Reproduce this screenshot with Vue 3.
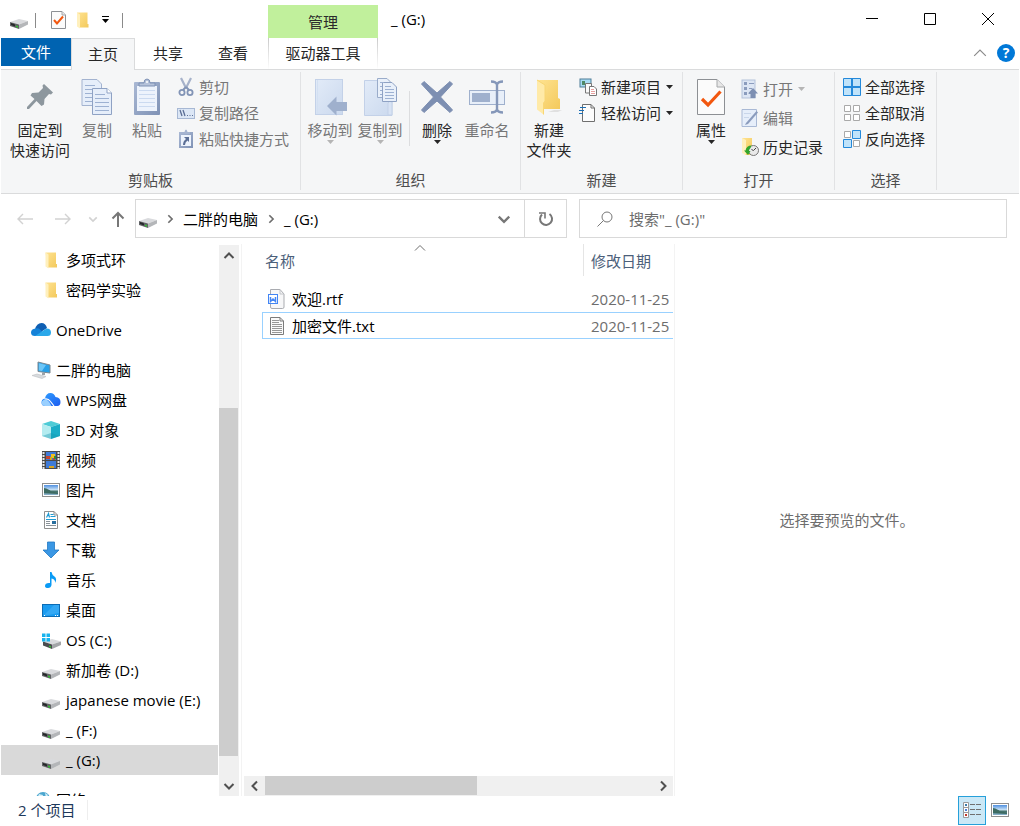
<template>
  <div class="explorer">
    <svg width="0" height="0" class="sprite" aria-hidden="true">
      <defs>
        <linearGradient id="gFolder" x1="0" y1="0" x2="1" y2="1">
          <stop offset="0" stop-color="#ffe391" />
          <stop offset="1" stop-color="#f3c95c" />
        </linearGradient>
        <linearGradient id="gSteel" x1="0" y1="0" x2="1" y2="1">
          <stop offset="0" stop-color="#a9b8d4" />
          <stop offset="1" stop-color="#7f92b5" />
        </linearGradient>
        <linearGradient id="gPale" x1="0" y1="0" x2="1" y2="1">
          <stop offset="0" stop-color="#e2ebf8" />
          <stop offset="1" stop-color="#cbd9ee" />
        </linearGradient>
        <linearGradient id="gSky" x1="0" y1="0" x2="0" y2="1">
          <stop offset="0" stop-color="#4f8fe0" />
          <stop offset="0.5" stop-color="#cfe6f7" />
          <stop offset="0.6" stop-color="#3d6b62" />
          <stop offset="1" stop-color="#8fb7d6" />
        </linearGradient>
        <linearGradient id="gWps" x1="0" y1="0" x2="1" y2="1">
          <stop offset="0" stop-color="#2fa0ff" />
          <stop offset="1" stop-color="#1d5cf0" />
        </linearGradient>
      </defs>

      <symbol id="drive" viewBox="0 0 18 18">
        <path d="M0 11 9 8 18 10 9 13.500z" fill="#d9dadd" />
        <path d="M0 11 9 13.500V18L0 15z" fill="#606265" />
        <path d="M9 13.500 18 10V13.500L9 18z" fill="#b4b6b9" />
        <path d="M1 12l4 1.500v2L1 14z" fill="#252729" />
        <path d="M6 14.500l2 .700v1.500l-2-.700z" fill="#2fc52f" />
      </symbol>
      <symbol id="osdrive" viewBox="0 0 20 18">
        <path d="M2 10.500 11 8 20 10.500 11 13.500z" fill="#d9dadd" />
        <path d="M2 10.500 11 13.500V18L2 14.500z" fill="#4a4c4f" />
        <path d="M11 13.500 20 10.500V14L11 18z" fill="#a3a5a8" />
        <path d="M8 14.500l2 .700v1.500L8 16z" fill="#2fc52f" />
        <path d="M1 2.500h3.500V6H1zM5.500 2.500H9V6H5.500zM1 7h3.500v3.500H1zM5.500 7H9v3.500H5.500z" fill="#18b4ee" />
      </symbol>
      <symbol id="checkpage" viewBox="0 0 28 36">
        <path d="M.5.5H20L27.500 8V35.500H.5z" fill="#fbfbfb" stroke="#8d9094" />
        <path d="M20 .5V8h7.500" fill="#e7e7e7" stroke="#a6a8aa" />
        <path d="M5 20l6 6L23.500 12.500" fill="none" stroke="#f2570f" stroke-width="3.200" />
      </symbol>
      <symbol id="checksmall" viewBox="0 0 15 18">
        <path d="M.5.5H11L14.500 4V17.500H.5z" fill="#fbfbfb" stroke="#8d9094" />
        <path d="M11 .5V4h3.500" fill="#e7e7e7" stroke="#a6a8aa" />
        <path d="M3 9l3 3.500 6-7" fill="none" stroke="#f2570f" stroke-width="2" />
      </symbol>
      <symbol id="folder" viewBox="0 0 13 17">
        <path d="M1 .5h10.500V12h1V15.500H3z" fill="url(#gFolder)" />
        <path d="M1 .5 4 2.500V16.500L1 14.500z" fill="#fff0bd" />
      </symbol>
      <symbol id="bigfolder" viewBox="0 0 26 38">
        <path d="M18 32l8 0-4 2h-10z" fill="#e0e0e0" />
        <path d="M1 2H22V20l2 1V31H8z" fill="url(#gFolder)" />
        <path d="M1 2 9 7V23L7.500 25V36.500L1 31.500z" fill="#ffeaa8" />
        <path d="M1 2 9 7V23L7.500 25V36.500" fill="none" stroke="#f8d674" />
      </symbol>
      <symbol id="pin" viewBox="0 0 28 28">
        <path d="M18 1 27 9.500 25 11.500 23 11 18.500 16 18 21.500 15.500 23 10.500 18 3 26H1V24L8.500 16 4.500 12.500 6 10 12.500 9.500 17 5 16.500 2.500z" fill="#8d979e" />
      </symbol>
      <symbol id="copy" viewBox="0 0 32 38">
        <path d="M1 1.500H16L20.500 6V27.500H1z" fill="#e6eefa" stroke="#a3b3d0" />
        <path d="M4 7.500H14M4 11.500H17M4 15.500H12M4 19.500H11M4 23.500H11" stroke="#9db1d2" />
        <path d="M11.500 10.500H26L30.500 15V36.500H11.500z" fill="#e6eefa" stroke="#8fa2c4" />
        <path d="M26 10.500V15h4.500" fill="#fff" stroke="#8fa2c4" />
        <path d="M14 16.500H24M14 20.500H28M14 24.500H28M14 28.500H28M14 32.500H28" stroke="#9db1d2" />
      </symbol>
      <symbol id="paste" viewBox="0 0 28 38">
        <rect x="1" y="4" width="26" height="33" rx="1" fill="url(#gSteel)" />
        <rect x="4" y="8" width="20" height="25" fill="#edf3fc" />
        <path d="M6 12.500H22M6 16.500H22M6 20.500H22M6 24.500H22M6 28.500H22" stroke="#cbdaf0" />
        <path d="M6 8V5h5q0-4 3-4t3 4h5v3z" fill="#b5c2da" stroke="#7f92b5" />
        <circle cx="14" cy="4" r="1" fill="#fff" />
      </symbol>
      <symbol id="scissors" viewBox="0 0 18 20">
        <path d="M4 1 9 11M14 1 9 11" fill="none" stroke="#a6b2ca" stroke-width="2.200" />
        <path d="M9 10 6 13M9 10l3 3" stroke="#8294b6" stroke-width="2" />
        <circle cx="5" cy="15.500" r="2.600" fill="none" stroke="#8294b6" stroke-width="1.800" />
        <circle cx="13" cy="15.500" r="2.600" fill="none" stroke="#8294b6" stroke-width="1.800" />
      </symbol>
      <symbol id="path" viewBox="0 0 18 18">
        <rect x=".5" y="4.500" width="17" height="10" fill="#dce7f6" stroke="#a7b8d4" />
        <path d="M3 6l2 6M6 6l2 6" stroke="#5b6f96" stroke-width="1.300" />
        <path d="M10 11.500h1M12.500 11.500h1M15 11.500h1" stroke="#5b6f96" />
      </symbol>
      <symbol id="shortcut" viewBox="0 0 18 20">
        <rect x="2" y="3" width="14" height="16" fill="url(#gSteel)" />
        <rect x="4" y="6" width="10" height="11" fill="#edf3fc" />
        <path d="M5 5V3h2.500Q8 .5 9 .5t1.500 2.500H13v2z" fill="#a5b4d0" />
        <path d="M7 8h5v5l-1.500-1.500Q8 13 8 16H6q0-4 3-6z" fill="#5b6f96" />
      </symbol>
      <symbol id="moveto" viewBox="0 0 34 38">
        <rect x="2.500" y="1.500" width="27" height="35" fill="url(#gPale)" stroke="#c3d1e8" />
        <path d="M4.500 2v34" stroke="#d3e0f2" />
        <path d="M14 28 23.500 18.500V24H34V33H23.500V37.500z" fill="#9fb0cd" />
      </symbol>
      <symbol id="copyto" viewBox="0 0 36 40">
        <path d="M2.500 3.500H27V25h3V38.500H2.500z" fill="url(#gPale)" stroke="#c3d1e8" />
        <path d="M26 38V26q1-3 4-1V38z" fill="#d8e3f4" stroke="#c3d1e8" />
        <path d="M15.500 1.500H25L28.500 5V20.500H15.500z" fill="#e9f0fa" stroke="#9aacca" />
        <path d="M20.500 5.500H30L34.500 10V24.500H20.500z" fill="#e9f0fa" stroke="#8fa2c4" />
        <path d="M18 5.500h4M18 9.500h2M18 13.500h2M18 17.500h2M23 9.500h6M23 12.500h9M23 15.500h9M23 18.500h9M23 21.500h9" stroke="#9db1d2" />
      </symbol>
      <symbol id="delete" viewBox="0 0 34 34">
        <path d="M4 1.500 17 13 30 1.500 32.500 4 20.500 17 32.500 30 30 32.500 17 21 4 32.500 1.500 30 13.500 17 1.500 4z" fill="#7d8fb2" stroke="#7d8fb2" />
      </symbol>
      <symbol id="rename" viewBox="0 0 38 36">
        <rect x="1.500" y="11.500" width="35" height="14" fill="#e8eff9" stroke="#9fb0cd" />
        <rect x="4" y="14" width="18" height="9" fill="#9fb0cd" />
        <path d="M23 2.500q5 0 6 3 1-3 6-3M23 33.500q5 0 6-3 1 3 6 3M29 4V32" fill="none" stroke="#8597b9" stroke-width="2.400" />
      </symbol>
      <symbol id="newitem" viewBox="0 0 18 18">
        <rect x="1" y="1" width="11" height="8" fill="#a8dcf4" stroke="#4f7d97" />
        <rect x="3" y="3" width="3" height="4" fill="#4f8a67" />
        <path d="M6.500 5.500h6V15h-6z" fill="#fafafa" stroke="#777" />
        <path d="M10.500 8.500H15l2.500 2.500v6.500h-7z" fill="#fff" stroke="#777" />
        <path d="M12 11.500h3M12 13.500h4M12 15.500h4" stroke="#e8a0a0" />
      </symbol>
      <symbol id="easyaccess" viewBox="0 0 18 20">
        <path d="M3.500 1.500H12L15.500 5V18.500H3.500z" fill="#fcfcfc" stroke="#6f6f6f" />
        <path d="M12 1.500V5h3.500" fill="none" stroke="#6f6f6f" />
        <path d="M1 4.500h6M0 7.500h5M0 10.500h4" stroke="#1c6fb5" stroke-width="1.200" />
      </symbol>
      <symbol id="open" viewBox="0 0 18 20">
        <rect x="1" y="1" width="13" height="18" fill="#dde6f4" stroke="#b3c1da" />
        <path d="M3 3h3v3H3zM3 8h3v3H3zM3 13h3v3H3z" fill="#8b9cbd" />
        <path d="M8 4.500h5M8 9.500h3M8 14.500h2" stroke="#8b9cbd" />
        <path d="M12 9l5 5.500h-2.500V19h-5v-4.500H7z" fill="#7d8fb2" />
      </symbol>
      <symbol id="edit" viewBox="0 0 18 20">
        <path d="M1 1.500H15.500V18.500H1z" fill="#e6eefa" stroke="#a9b9d5" />
        <path d="M3 5.500h7M3 9.500h5" stroke="#c9d6ea" />
        <path d="M5 15 15.500 3l1.500 1.500L7 16l-3 1z" fill="#8b9cbd" />
      </symbol>
      <symbol id="history" viewBox="0 0 18 20">
        <path d="M1 1H11V18H4z" fill="url(#gFolder)" />
        <path d="M1 1l4 2v15l-4-2z" fill="#fff0bd" />
        <circle cx="12.500" cy="13.500" r="5" fill="#e9e9e9" stroke="#777" />
        <path d="M12.500 13.500 15 11M12.500 13.500l-2-1" stroke="#444" />
        <path d="M4.500 13.500q1-5 6-5l-1 2.500Q8 12 8 14h1.500L7 18l-4-4.500z" fill="#32a52c" />
      </symbol>
      <symbol id="selectall" viewBox="0 0 18 18">
        <path d="M.5.5h17v17H.5z" fill="#c0e3fa" stroke="#2489da" />
        <path d="M9 0v18M0 9h18" stroke="#2489da" stroke-width="2" />
      </symbol>
      <symbol id="selectnone" viewBox="0 0 18 18">
        <path d="M1.500 1.500h6v6h-6zM10.500 1.500h6v6h-6zM1.500 10.500h6v6h-6zM10.500 10.500h6v6h-6z" fill="#fff" stroke="#a9a9a9" />
      </symbol>
      <symbol id="invert" viewBox="0 0 18 18">
        <path d="M1.500 1.500h6v6h-6zM10.500 10.500h6v6h-6z" fill="#fff" stroke="#a9a9a9" />
        <path d="M9.500.5h8v8h-8zM.5 9.500h8v8h-8z" fill="#c0e3fa" stroke="#2489da" />
      </symbol>
      <symbol id="onedrive" viewBox="0 0 20 18">
        <path d="M4 8.500Q5.500 2 10.500 2q4 0 5.500 5L10 11z" fill="#0f5fb3" />
        <path d="M4 15q-4 0-4-3.500T4.500 7.500Q7 6.500 9 8.500l6 6z" fill="#1582d8" />
        <path d="M4 15 15.500 7.500Q20 7.500 20 11.500 20 15 16.500 15z" fill="#2aa8ea" />
      </symbol>
      <symbol id="pc" viewBox="0 0 20 18">
        <path d="M7 1 19 4V12L7 10.500z" fill="#28a0e8" stroke="#7b8790" />
        <path d="M8 2.200 15 4l-4 6-3-.400z" fill="#6cc6f7" />
        <path d="M11 11.500l3 .500v2h-3z" fill="#9ba3a9" />
        <path d="M1 14.500 6 13l9 2.500-4 2z" fill="#d8dbde" stroke="#bcc0c3" stroke-width=".6" />
      </symbol>
      <symbol id="wps" viewBox="0 0 20 18">
        <path d="M4.500 15q-4 0-4-3.500T4 7.500Q5 2 9.500 2q3.500 0 5 4 5 .500 5 5t-4 4z" fill="url(#gWps)" />
        <path d="M2 14.500q-2-2-1-4 1-2 4-2 2 .500 3.500 3l2 3.500H4z" fill="#9ad0ff" />
        <path d="M3.500 8Q7 7 9.500 10.500L13 15" fill="none" stroke="#fff" stroke-width="1.200" />
      </symbol>
      <symbol id="cube" viewBox="0 0 18 18">
        <path d="M0 3 9 0 18 3 9 6z" fill="#4ecbd6" />
        <path d="M0 3 9 6V18L0 15z" fill="#b4ecf0" />
        <path d="M9 6 18 3V15L9 18z" fill="#1badc7" />
        <path d="M0 15 9 12 18 15 9 18z" fill="#1496b0" fill-opacity=".4" />
      </symbol>
      <symbol id="video" viewBox="0 0 18 18">
        <rect width="18" height="18" fill="#4a4a4a" />
        <path d="M1.500 1v17M16.500 1v17" stroke="#e8e8e8" stroke-width="2" stroke-dasharray="2 1" />
        <path d="M4 1h10v8H4zM4 10h10v7H4z" fill="#3f7bd8" />
        <path d="M9 3h4v4H9z" fill="#f0c020" />
        <path d="M4 5h4v3H4zM11 7h2v2h-2z" fill="#c8452f" />
        <path d="M8 6h2v3H8zM7 15h5v2H7z" fill="#d9a520" />
        <path d="M12 5h2v3h-2z" fill="#2f8a3c" />
      </symbol>
      <symbol id="picture" viewBox="0 0 18 18">
        <rect x=".5" y="2.500" width="17" height="13" fill="#fff" stroke="#8f8f8f" />
        <rect x="2" y="4" width="14" height="10" fill="url(#gSky)" />
        <path d="M2 7q5 1 7 3.500l7 1V13L2 12z" fill="#3d6b62" />
      </symbol>
      <symbol id="document" viewBox="0 0 18 18">
        <path d="M2.500.5H12L15.500 4V17.500H2.500z" fill="#fff" stroke="#8f8f8f" />
        <path d="M12 .5V4h3.500" fill="none" stroke="#8f8f8f" />
        <path d="M4.500 6.500 6.500 2.500 7.500 6.500M8.500 3.500h3M8.500 5.500h5M4 8.500h10" fill="none" stroke="#1f9bd4" stroke-width="1.200" />
        <path d="M4 10.500h4M4 12.500h4M4 14.500h10" stroke="#8a9299" />
        <path d="M10 10h4v3h-4z" fill="#2a6f9f" />
      </symbol>
      <symbol id="download" viewBox="0 0 18 18">
        <path d="M5.500 1h7v8H17L9 17 1 9h4.500z" fill="#3a97e4" stroke="#2279c4" stroke-width=".8" />
      </symbol>
      <symbol id="music" viewBox="0 0 18 18">
        <path d="M8 1h1.500q.500 3 3 4.500 3 2.500.500 6.500.500-4-3.500-4.500V14q-.500 3-3.500 3-3 0-3-2 0-3 4-3H8z" fill="#0a9bf5" />
      </symbol>
      <symbol id="desktop" viewBox="0 0 18 18">
        <rect x=".5" y="3.500" width="17" height="12" fill="#1a9bf0" stroke="#0c6cb5" />
        <path d="M1 15 12 4h5v8z" fill="#4db5f8" fill-opacity=".5" />
        <path d="M2 14.500h1M13 14.500h1M15 14.500h1" stroke="#fff" />
      </symbol>
      <symbol id="network" viewBox="0 0 20 18">
        <circle cx="12" cy="8" r="7" fill="#4ba6cf" />
        <path d="M8 3l4 1-1 4H6zM14 2l3 2-2 3z" fill="#d5eef7" />
      </symbol>
      <symbol id="rtf" viewBox="0 0 18 20">
        <path d="M2.500.5H12L16 5V18q0 1.500-1.500 1.500H4q-1.500 0-1.500-1.500z" fill="#f7f7f8" stroke="#a9abb0" />
        <path d="M12 .5V5h4" fill="none" stroke="#c2c4c8" />
        <rect x=".5" y="5.500" width="9" height="9" fill="#fff" stroke="#4285f4" />
        <path d="M2.500 8v4.500L5 10l2.500 2.500V8" fill="none" stroke="#4285f4" stroke-width="1.500" />
      </symbol>
      <symbol id="txt" viewBox="0 0 18 20">
        <path d="M2.500 1.500H12L15.500 5V18.500H2.500z" fill="#fafafa" stroke="#7b7b7b" />
        <path d="M12 1.500V5h3.500" fill="none" stroke="#7b7b7b" />
        <path d="M4 4.500h7M4 6.500h7M4 8.500h10M4 10.500h10M4 12.500h10M4 14.500h10M4 16.500h10" stroke="#979797" />
      </symbol>
      <symbol id="details" viewBox="0 0 18 16">
        <path d="M.5.5h5v15h-5zM.5 5.500h5M.5 10.500h5" fill="#fff" stroke="#9a9a9a" />
        <path d="M2 2h2v2H2z" fill="#3a7ca8" />
        <path d="M2 7h2v2H2z" fill="#4a80d8" />
        <path d="M2 12h2v2H2z" fill="#c0392b" />
        <path d="M7 2.500h5M13 2.500h5M7 7.500h5M13 7.500h5M7 12.500h5M13 12.500h5" stroke="#707070" />
      </symbol>
      <symbol id="chev" viewBox="0 0 12 12">
        <path d="M1.500 4 6 8.500 10.500 4" fill="none" stroke="currentColor" stroke-width="2" />
      </symbol>
      <symbol id="chevthin" viewBox="0 0 12 12">
        <path d="M1 3.500 6 8.500 11 3.500" fill="none" stroke="currentColor" />
      </symbol>
      <symbol id="arrow" viewBox="0 0 18 18">
        <path d="M17 9H2M7 4 2 9l5 5" fill="none" stroke="currentColor" stroke-width="1.400" />
      </symbol>
    </svg>

    <header class="titlebar">
      <div class="quick">
        <svg class="i18"><use href="#drive" /></svg>
        <span class="bar"></span>
        <button class="q-check" aria-label="属性"><svg width="15" height="18"><use href="#checksmall" /></svg></button>
        <button class="q-folder" aria-label="新建文件夹"><svg width="13" height="17"><use href="#folder" /></svg></button>
        <button class="q-more" aria-label="自定义快速访问工具栏">
          <svg width="8" height="8"><path d="M0 .5h7" stroke="#000" /><path d="M0 3h7L3.500 7z" /></svg>
        </button>
        <span class="bar"></span>
      </div>
      <div class="context">管理</div>
      <h1>_ (G:)</h1>
      <div class="controls">
        <button aria-label="最小化"><svg width="12" height="12"><path d="M0 5.500h12" stroke="#000" /></svg></button>
        <button aria-label="最大化"><svg width="12" height="12"><path d="M.5.5h11v11H.5z" fill="none" stroke="#000" /></svg></button>
        <button aria-label="关闭"><svg width="12" height="12"><path d="M0 0l12 12M12 0 0 12" stroke="#000" /></svg></button>
      </div>
    </header>

    <nav class="tabs">
      <button class="tab file">文件</button>
      <button class="tab home">主页</button>
      <button class="tab share">共享</button>
      <button class="tab view">查看</button>
      <button class="tab tools">驱动器工具</button>
      <div class="tabs-end">
        <button aria-label="最小化功能区"><svg class="flip grey" width="14" height="14"><use href="#chevthin" /></svg></button>
        <button class="help" aria-label="帮助">?</button>
      </div>
    </nav>

    <section class="ribbon">
      <div v-for="group in groups" :key="group.label" class="group" :class="group.cls">
        <div class="group-body">
          <template v-for="(b, i) in group.big" :key="i">
            <span v-if="b.split" class="split"></span>
            <button v-else class="big" :class="b.cls" :disabled="b.off">
              <span class="big-icon"><svg :width="b.w" :height="b.h"><use :href="'#' + b.icon" /></svg></span>
              <span v-for="line in b.text" :key="line" class="line">{{ line }}</span>
              <svg v-if="b.menu" class="caret" width="7" height="4"><path d="M0 0h7L3.500 4z" /></svg>
            </button>
          </template>
          <div v-if="group.small" class="smalls">
            <button v-for="s in group.small" :key="s.text" class="small" :disabled="s.off">
              <svg width="18" height="20"><use :href="'#' + s.icon" /></svg>
              <span>{{ s.text }}</span>
              <svg v-if="s.menu" class="caret" width="7" height="4"><path d="M0 0h7L3.500 4z" /></svg>
            </button>
          </div>
        </div>
        <div class="group-label">{{ group.label }}</div>
      </div>
    </section>

    <div class="address-row">
      <div class="history">
        <button class="pale" aria-label="后退"><svg class="i18"><use href="#arrow" /></svg></button>
        <button class="pale forward" aria-label="前进"><svg class="i18 flip"><use href="#arrow" /></svg></button>
        <button class="pale recent" aria-label="最近浏览的位置"><svg width="10" height="10"><use href="#chev" /></svg></button>
        <button class="up" aria-label="上移">
          <svg width="14" height="18"><path d="M7 17V3M1.500 8.500 7 3l5.500 5.500" fill="none" stroke="#777" stroke-width="2" /></svg>
        </button>
      </div>
      <div class="address">
        <svg class="i18"><use href="#drive" /></svg>
        <svg class="crumb first" width="10" height="10"><use href="#chev" /></svg>
        <a href="#">二胖的电脑</a>
        <svg class="crumb" width="10" height="10"><use href="#chev" /></svg>
        <a href="#">_ (G:)</a>
        <button class="drop" aria-label="以前的位置"><svg width="14" height="14"><use href="#chev" /></svg></button>
        <button class="refresh" aria-label="刷新">
          <svg width="16" height="16">
            <path d="M11.500 3A6 6 0 1 1 4 3.500" fill="none" stroke="#777" stroke-width="2" />
            <path d="M1 2h6v5.500" fill="none" stroke="#777" stroke-width="1.600" />
          </svg>
        </button>
      </div>
      <div class="search">
        <svg width="16" height="16">
          <circle cx="10" cy="6" r="5" fill="none" stroke="#777" />
          <path d="M6.500 9.500.5 15.500" stroke="#777" />
        </svg>
        <input v-model="query" type="text" aria-label="搜索" placeholder="搜索&quot;_ (G:)&quot;">
      </div>
    </div>

    <main class="content">
      <ul class="tree">
        <li v-for="item in tree" :key="item.text" :class="{ root: item.root, selected: item.selected }">
          <a href="#">
            <svg v-if="item.icon === 'folder'" class="icon" height="17"><use href="#folder" /></svg>
            <svg v-else class="icon" height="18"><use :href="'#' + item.icon" /></svg>
            <span>{{ item.text }}</span>
          </a>
        </li>
      </ul>
      <div class="vscroll">
        <button aria-label="向上滚动"><svg class="flip" width="12" height="12"><use href="#chev" /></svg></button>
        <div class="before"></div>
        <div class="thumb"></div>
        <div class="after"></div>
        <button aria-label="向下滚动"><svg width="12" height="12"><use href="#chev" /></svg></button>
      </div>

      <section class="files">
        <div class="list">
          <svg class="sort" width="12" height="8"><path d="M1 6.500 6 1.500 11 6.500" fill="none" stroke="#6e6e6e" /></svg>
          <table>
            <thead>
              <tr>
                <th class="name">名称</th>
                <th class="date">修改日期</th>
              </tr>
            </thead>
            <tbody>
              <tr v-for="file in files" :key="file.name" :class="{ focused: file.focused }">
                <td class="name">
                  <div><svg width="18" height="20"><use :href="'#' + file.icon" /></svg>{{ file.name }}</div>
                </td>
                <td class="date">{{ file.date }}</td>
              </tr>
            </tbody>
          </table>
        </div>
        <div class="hscroll">
          <button aria-label="向左滚动"><svg class="left" width="12" height="12"><use href="#chev" /></svg></button>
          <div class="thumb"></div>
          <div class="after"></div>
          <button aria-label="向右滚动"><svg class="right" width="12" height="12"><use href="#chev" /></svg></button>
        </div>
      </section>

      <aside class="preview">选择要预览的文件。</aside>
    </main>

    <footer class="status">
      <span class="count">{{ files.length }} 个项目</span>
      <div class="views">
        <button class="active" aria-label="详细信息"><svg width="18" height="16"><use href="#details" /></svg></button>
        <button aria-label="大缩略图"><svg class="i18"><use href="#picture" /></svg></button>
      </div>
    </footer>
  </div>
</template>

<script setup>
import { ref } from 'vue'

const query = ref('')

const groups = [
  {
    label: '剪贴板',
    cls: 'clipboard',
    big: [
      { text: ['固定到', '快速访问'], icon: 'pin', w: 28, h: 28, cls: 'w68' },
      { text: ['复制'], icon: 'copy', w: 32, h: 38, cls: 'w46', off: true },
      { text: ['粘贴'], icon: 'paste', w: 28, h: 38, cls: 'w54', off: true }
    ],
    small: [
      { text: '剪切', icon: 'scissors', off: true },
      { text: '复制路径', icon: 'path', off: true },
      { text: '粘贴快捷方式', icon: 'shortcut', off: true }
    ]
  },
  {
    label: '组织',
    cls: 'organize',
    big: [
      { text: ['移动到'], icon: 'moveto', w: 34, h: 38, cls: 'w50', off: true, menu: true },
      { text: ['复制到'], icon: 'copyto', w: 36, h: 40, cls: 'w50', off: true, menu: true },
      { split: true },
      { text: ['删除'], icon: 'delete', w: 34, h: 34, cls: 'w46', menu: true },
      { text: ['重命名'], icon: 'rename', w: 38, h: 36, cls: 'w54', off: true }
    ]
  },
  {
    label: '新建',
    cls: 'new',
    big: [{ text: ['新建', '文件夹'], icon: 'bigfolder', w: 26, h: 38, cls: 'w54' }],
    small: [
      { text: '新建项目', icon: 'newitem', menu: true },
      { text: '轻松访问', icon: 'easyaccess', menu: true }
    ]
  },
  {
    label: '打开',
    cls: 'open',
    big: [{ text: ['属性'], icon: 'checkpage', w: 28, h: 36, cls: 'w54', menu: true }],
    small: [
      { text: '打开', icon: 'open', off: true, menu: true },
      { text: '编辑', icon: 'edit', off: true },
      { text: '历史记录', icon: 'history' }
    ]
  },
  {
    label: '选择',
    cls: 'select',
    small: [
      { text: '全部选择', icon: 'selectall' },
      { text: '全部取消', icon: 'selectnone' },
      { text: '反向选择', icon: 'invert' }
    ]
  }
]

const tree = [
  { text: '多项式环', icon: 'folder' },
  { text: '密码学实验', icon: 'folder' },
  { text: 'OneDrive', icon: 'onedrive', root: true },
  { text: '二胖的电脑', icon: 'pc', root: true },
  { text: 'WPS网盘', icon: 'wps' },
  { text: '3D 对象', icon: 'cube' },
  { text: '视频', icon: 'video' },
  { text: '图片', icon: 'picture' },
  { text: '文档', icon: 'document' },
  { text: '下载', icon: 'download' },
  { text: '音乐', icon: 'music' },
  { text: '桌面', icon: 'desktop' },
  { text: 'OS (C:)', icon: 'osdrive' },
  { text: '新加卷 (D:)', icon: 'drive' },
  { text: 'japanese movie (E:)', icon: 'drive' },
  { text: '_ (F:)', icon: 'drive' },
  { text: '_ (G:)', icon: 'drive', selected: true },
  { text: '网络', icon: 'network', root: true }
]

const files = [
  { name: '欢迎.rtf', icon: 'rtf', date: '2020-11-25' },
  { name: '加密文件.txt', icon: 'txt', date: '2020-11-25', focused: true }
]
</script>

<style>
body {
  background: #fff;
}
</style>

<style scoped>
.explorer {
  display: flex;
  flex-direction: column;
  height: 100vh;
  padding: 0 1px;
  box-sizing: border-box;
  overflow: hidden;
  font-family: "Open Sans", "Noto Sans CJK SC", sans-serif;
  font-size: 15px;
  line-height: 20px;
  color: #000;
}

.explorer * {
  box-sizing: border-box;
}

.sprite,
svg {
  display: block;
  flex: none;
}

button {
  display: flex;
  align-items: center;
  justify-content: center;
  margin: 0;
  padding: 0;
  border: 0;
  background: none;
  font: inherit;
  color: inherit;
}

a {
  color: inherit;
  text-decoration: none;
}

.i18 {
  width: 18px;
  height: 18px;
}

.flip {
  transform: rotate(180deg);
}

.grey {
  color: #8a8a8a;
}

/* Title bar */
.titlebar {
  display: flex;
  height: 38px;
}

.quick {
  display: flex;
  align-items: center;
  width: 267px;
  padding-left: 9px;
  padding-top: 2px;
}

.bar {
  width: 1px;
  height: 15px;
  margin: 0 7px;
  background: #8a8a8a;
}

.q-check {
  margin-left: 8px;
}

.q-folder {
  margin-left: 10px;
}

.q-more {
  margin: 0 5px 0 13px;
}

.context {
  display: flex;
  align-items: center;
  justify-content: center;
  width: 110px;
  margin-top: 5px;
  background: #c1f09c;
  color: #2b2b2b;
}

h1 {
  flex: 1;
  margin: 0 0 0 13px;
  font-size: 15px;
  font-weight: 400;
  line-height: 38px;
}

.controls {
  display: flex;
  padding-right: 2px;
}

.controls button {
  width: 58px;
}

/* Tabs */
.tabs {
  display: flex;
  height: 31px;
  color: #262626;
}

.tab {
  height: 31px;
  padding-bottom: 2px;
}

.file {
  width: 70px;
  height: 28px;
  padding-bottom: 0;
  background: #0063b1;
  color: #fff;
}

.home {
  position: relative;
  width: 64px;
  height: 32px;
  border: 1px solid #dadbdc;
  border-bottom: 0;
  background: #f5f6f7;
}

.share {
  width: 66px;
}

.view {
  width: 64px;
}

.tools {
  width: 110px;
  margin-left: 3px;
  border: solid;
  border-width: 0 1px;
  border-image: linear-gradient(#c8c8c8, #fff) 1;
}

.tabs-end {
  display: flex;
  align-items: center;
  gap: 10px;
  margin-left: auto;
  padding: 0 4px 2px 0;
}

.help {
  width: 18px;
  height: 18px;
  border-radius: 50%;
  background: #0078d7;
  color: #fff;
  font-size: 14px;
  font-weight: 700;
}

/* Ribbon */
.ribbon {
  display: flex;
  height: 125px;
  padding-top: 2px;
  border: solid #dadbdc;
  border-width: 1px 0;
  background: #f5f6f7;
  color: #262626;
}

.group {
  display: flex;
  flex-direction: column;
  height: 118px;
  padding-top: 2px;
  border-right: 1px solid #e1e2e4;
}

.group-body {
  display: flex;
  height: 96px;
  padding: 0 11px 0 1px;
}

.clipboard .group-body {
  padding-left: 5px;
}

.organize .group-body {
  padding: 0 6px 0 4px;
}

.new .group-body {
  padding-right: 9px;
}

.select .group-body {
  padding-left: 5px;
}

.group-label {
  text-align: center;
  color: #4d4d4d;
}

.big {
  flex-direction: column;
  justify-content: flex-start;
  height: 86px;
  padding-top: 2px;
}

.big-icon {
  display: flex;
  align-items: center;
  height: 42px;
  margin-bottom: 2px;
}

.line {
  white-space: nowrap;
}

.w46 {
  width: 46px;
}

.w50 {
  width: 50px;
}

.w54 {
  width: 54px;
}

.w68 {
  width: 68px;
}

button:disabled {
  color: #777;
}

.caret {
  fill: #262626;
}

button:disabled .caret {
  fill: #b5b5b5;
}

.split {
  width: 1px;
  height: 55px;
  margin: 17px 4px 0;
  background: #dcdddf;
}

.smalls {
  padding-left: 3px;
}

.small {
  gap: 4px;
  height: 26px;
  white-space: nowrap;
}

.small .caret {
  margin-left: 1px;
}

.open .small {
  height: 29px;
}

/* Address row */
.address-row {
  display: flex;
  height: 50px;
  padding: 5px 12px 6px 0;
}

.history {
  display: flex;
  align-items: center;
  width: 134px;
  padding-left: 15px;
}

.pale {
  width: 18px;
  margin-right: 20px;
  color: #d2d2d2;
}

.forward {
  margin-right: 12px;
}

.recent {
  margin-right: 9px;
}

.address,
.search {
  display: flex;
  align-items: center;
  min-width: 0;
  border: 1px solid #d9d9d9;
}

.address {
  flex: 427;
  padding-left: 3px;
}

.address a {
  margin: 0 8px;
}

.crumb {
  color: #6e6e6e;
  transform: rotate(-90deg);
}

.first {
  margin-left: 8px;
}

.drop {
  width: 40px;
  height: 37px;
  margin-left: auto;
  color: #777;
}

.refresh {
  width: 42px;
  height: 37px;
  border-left: 1px solid #d9d9d9;
}

.search {
  flex: 409;
  margin-left: 12px;
  padding-left: 17px;
}

.search input {
  flex: 1;
  min-width: 0;
  height: 30px;
  margin-left: 16px;
  padding: 0;
  border: 0;
  outline: 0;
  font: inherit;
}

.search input::placeholder {
  color: #6d6d6d;
}

/* Content */
.content {
  display: flex;
  flex: 1;
  min-height: 0;
}

.tree {
  width: 217px;
  margin: 0;
  padding: 1px 0 0;
  overflow: hidden;
  list-style: none;
}

.tree a {
  display: flex;
  align-items: center;
  gap: 5px;
  height: 30px;
  padding-left: 40px;
  white-space: nowrap;
}

.tree .icon {
  width: 20px;
}

.tree .root {
  margin-top: 10px;
}

.tree .root a {
  padding-left: 30px;
}

.selected {
  background: #d9d9d9;
}

.vscroll {
  display: flex;
  flex-direction: column;
  width: 20px;
  margin: 1px 2px 0 1px;
  background: #f0f0f0;
  color: #505050;
}

.vscroll button {
  height: 21px;
}

.vscroll .before {
  flex: 142;
}

.vscroll .thumb {
  flex: 348;
  width: 19px;
}

.vscroll .after {
  flex: 19;
}

.thumb {
  background: #cdcdcd;
}

.files {
  display: flex;
  flex-direction: column;
  width: 434px;
  padding: 0 1px 0 2px;
  border: solid #f3f3f3;
  border-width: 0 1px;
}

.list {
  position: relative;
  flex: 1;
  min-height: 0;
  overflow: hidden;
}

.sort {
  position: absolute;
  left: 170px;
  top: 0;
}

table {
  width: 520px;
  margin-left: 18px;
  table-layout: fixed;
  border-collapse: separate;
  border-spacing: 0;
}

th {
  height: 41px;
  padding: 0 0 7px 3px;
  text-align: left;
  font-weight: 400;
  color: #4c607a;
}

th.name {
  width: 322px;
  background: linear-gradient(#e5e5e5, #e5e5e5) right top / 1px 32px no-repeat;
}

th.date {
  padding-left: 7px;
}

td {
  height: 27px;
  padding: 0 7px;
  border: solid transparent;
  border-width: 1px 0;
}

td.name {
  padding-left: 5px;
  border-left-width: 1px;
}

td div {
  display: flex;
  align-items: center;
  gap: 6px;
}

td.date {
  color: #6d6d6d;
}

.focused td {
  border-color: #99d1ff;
}

.hscroll {
  display: flex;
  height: 20px;
  background: #f0f0f0;
  color: #505050;
}

.hscroll button {
  width: 21px;
}

.hscroll .thumb {
  flex: 212;
  height: 19px;
}

.hscroll .after {
  flex: 175;
}

.left {
  transform: rotate(90deg);
}

.right {
  transform: rotate(-90deg);
}

.preview {
  display: flex;
  flex: 1;
  align-items: center;
  justify-content: center;
  color: #6d6d6d;
}

/* Status bar */
.status {
  display: flex;
  align-items: center;
  justify-content: space-between;
  height: 30px;
  padding-bottom: 2px;
  color: #1e395b;
}

.count {
  padding: 0 12px 0 17px;
  border-right: 1px solid #eee;
}

.views {
  display: flex;
  padding-right: 5px;
}

.views button {
  width: 28px;
  height: 29px;
}

.views .active {
  border: 1px solid #26a0da;
  background: #cbe8f6;
}
</style>
